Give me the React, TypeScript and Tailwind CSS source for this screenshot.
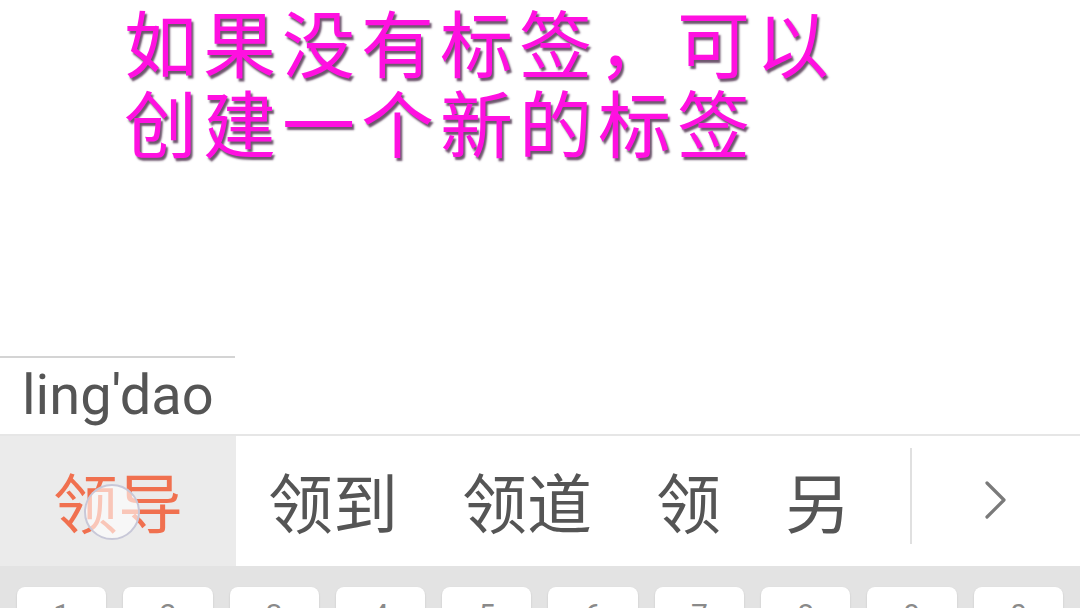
import React from "react";

const cjk = { fontFamily: '"Noto Sans CJK SC", "Noto Sans", sans-serif' };

export default function App() {
  const cands = ["领到", "领道", "领", "另"];
  const keys = ["1", "2", "3", "4", "5", "6", "7", "8", "9", "0"];
  return (
    <div className="w-[1080px] h-[608px] overflow-hidden bg-white flex flex-col" style={cjk}>
      <div className="h-[356px] shrink-0 pl-[124px]">
        <div className="text-[73px] leading-[80px] tracking-[6px] font-normal text-[#ff10e0] [text-shadow:2px_3px_2px_rgba(60,30,60,0.75)]">
          <div>如果没有标签，可以</div>
          <div>创建一个新的标签</div>
        </div>
      </div>
      <div className="h-[78px] shrink-0 flex flex-col">
        <div className="w-[235px] h-[2px] bg-[#d4d4d4]" />
        <div
          className="pl-[22px] pt-[4px] text-[56px] leading-[66px] text-[#555555]"
          style={{ fontFamily: 'Roboto, "Noto Sans", sans-serif' }}
        >
          ling'dao
        </div>
      </div>
      <div className="h-[132px] shrink-0 border-t-2 border-[#e6e6e6] flex items-stretch">
        <div className="relative w-[236px] shrink-0 bg-[#ebebeb] flex items-center justify-center text-[65px] text-[#f0704f]">
          <span className="leading-none -mt-[2px]">领导</span>
          <div className="absolute left-[84px] top-[48px] w-[56px] h-[56px] rounded-full border-2 border-[#c8c8d8] bg-white/60" />
        </div>
        <div className="flex items-center">
          {cands.map((c) => (
            <span key={c} className="px-[32px] text-[65px] leading-none text-[#555555] -mt-[2px]">
              {c}
            </span>
          ))}
        </div>
        <div className="ml-auto flex items-center">
          <div className="w-[2px] h-[96px] bg-[#e0e0e0] -mt-[10px]" />
          <div className="w-[168px] flex items-center justify-center -mt-[2px]">
            <svg width="26" height="40" viewBox="0 0 26 40" fill="none">
              <path d="M4 3 L21 20 L4 37" stroke="#7a7a7a" strokeWidth="3.2" strokeLinecap="round" strokeLinejoin="round" />
            </svg>
          </div>
        </div>
      </div>
      <div className="flex-1 bg-[#e3e3e3] flex gap-[17px] px-[17px] pt-[21px]">
        {keys.map((k, i) => (
          <div
            key={i}
            className="flex-1 h-[100px] rounded-[8px] bg-white shadow-[0_1px_2px_rgba(0,0,0,0.15)] flex justify-center pt-[10px] text-[30px] leading-[36px] text-[#8a8a8a]"
            style={{ fontFamily: 'Roboto, "Noto Sans", sans-serif' }}
          >
            {k}
          </div>
        ))}
      </div>
    </div>
  );
}
